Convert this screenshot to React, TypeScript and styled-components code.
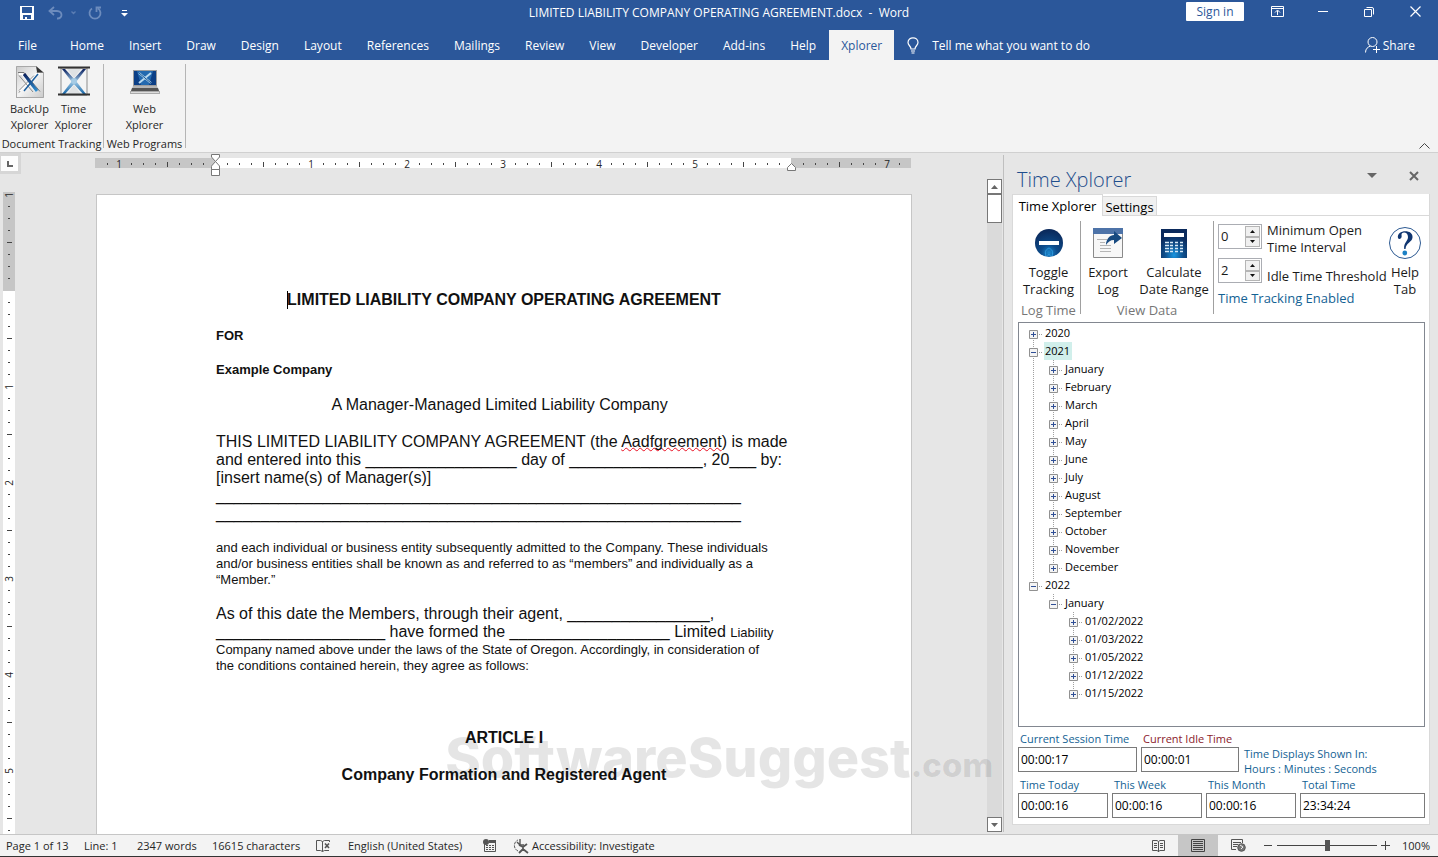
import React, { useState } from "react";
import styled, { createGlobalStyle, css } from "styled-components";

const ui = `"Open Sans", "Noto Sans", sans-serif`;
const doc = `"Liberation Sans", Arial, sans-serif`;
const blue = "#2b579a";
const link = "#136294";

const GlobalStyle = createGlobalStyle`
  * { box-sizing: border-box; }
  body { margin: 0; background: #e6e6e6; font-family: ${ui}; font-size: 12px; color: #262626; }
  button, input { font: inherit; color: inherit; }
  button { padding: 0; border: 0; background: none; cursor: pointer; }
  svg { display: block; flex: none; }
`;

const Shell = styled.div`
  display: flex;
  flex-direction: column;
  height: 100vh;
  overflow: hidden;
`;

/* ---------- title bar ---------- */

const TitleBar = styled.header`
  display: grid;
  grid-template-columns: 1fr auto 1fr;
  height: 30px;
  flex: none;
  background: ${blue};
  color: #fff;
`;
const QuickAccess = styled.div`
  display: flex;
  align-items: center;
  height: 26px;
  padding-left: 20px;
`;
const QuickButton = styled.button<{ $gap?: number }>`
  display: flex;
  margin-right: ${(p) => p.$gap ?? 0}px;
`;
const FileTitle = styled.h1`
  margin: 0;
  font-size: 12px;
  font-weight: 400;
  line-height: 26px;
  white-space: pre;
`;
const WindowControls = styled.div`
  display: flex;
  justify-content: flex-end;
`;
const SignIn = styled.button`
  align-self: flex-start;
  width: 58px;
  height: 19px;
  margin: 2px 10px 0 0;
  border-radius: 1px;
  background: #fff;
  color: ${blue};
  line-height: 20px;
`;
const WindowButton = styled.button`
  display: flex;
  align-items: center;
  justify-content: center;
  width: 46px;
  height: 23px;
`;

/* ---------- ribbon tabs ---------- */

const TabRow = styled.nav`
  display: flex;
  gap: 1px;
  height: 30px;
  flex: none;
  background: ${blue};
  color: #fff;
`;
const RibbonTab = styled.button<{ $active?: boolean; $file?: boolean }>`
  padding: 1px 12px 0;
  line-height: 29px;
  white-space: nowrap;
  ${(p) => p.$file && css`width: 55px; margin-right: 2px;`}
  ${(p) => p.$active && css`background: #f3f3f3; color: ${blue};`}
`;
const TellMe = styled.button`
  display: flex;
  align-items: center;
  gap: 13px;
  margin-left: 12px;
  font-weight: 500;
`;
const Share = styled.button`
  display: flex;
  align-items: center;
  gap: 3px;
  margin: 0 23px 0 auto;
`;

/* ---------- ribbon ---------- */

const Ribbon = styled.section`
  display: flex;
  height: 93px;
  flex: none;
  padding-top: 4px;
  border-bottom: 1px solid #d0d0d0;
  background: #f3f3f3;
`;
const RibbonGroup = styled.div<{ $width: number }>`
  display: flex;
  flex-direction: column;
  justify-content: space-between;
  width: ${(p) => p.$width}px;
  height: 84px;
  border-right: 1px solid #b5b5b5;
`;
const GroupTools = styled.div`
  display: flex;
  justify-content: center;
`;
const RibbonTool = styled.button`
  display: flex;
  flex-direction: column;
  align-items: center;
  width: 44px;
  font-size: 11px;
  line-height: 16px;
  & > svg { margin-bottom: 3px; }
`;
const GroupName = styled.div`
  font-size: 11px;
  line-height: 8px;
  text-align: center;
  white-space: nowrap;
`;
const Collapse = styled.button`
  align-self: flex-end;
  margin: 0 8px 3px auto;
`;

/* ---------- workspace ---------- */

const Main = styled.main`
  display: flex;
  flex: 1;
  min-height: 0;
`;
const Workspace = styled.section`
  position: relative;
  display: flex;
  flex-direction: column;
  flex: 1;
  min-width: 0;
`;
const RulerRow = styled.div`
  display: flex;
  height: 26px;
  flex: none;
  padding-right: 18px;
`;
const Corner = styled.button`
  display: flex;
  align-items: center;
  justify-content: center;
  width: 21px;
  height: 21px;
  border: 3px solid #d6d6d6;
  border-left-width: 1px;
  background: #fdfdfd;
`;
const RulerTrack = styled.div`
  display: flex;
  flex: 1;
  justify-content: center;
  padding-top: 5px;
`;
const Scale = styled.div`
  position: relative;
  width: 816px;
  height: 10px;
`;
const Ticks = styled.div`
  display: flex;
  justify-content: center;
  height: 10px;
  background: linear-gradient(to right, #c6c6c6 120px, #fff 120px 696px, #c6c6c6 696px);
`;
const Cell = styled.span<{ $vertical?: boolean }>`
  display: flex;
  align-items: center;
  justify-content: center;
  flex: none;
  width: 12px;
  height: 12px;
  font-size: 10px;
  line-height: 12px;
  ${(p) => p.$vertical && css`transform: rotate(-90deg);`}
`;
const Tick = styled.i<{ $long?: boolean }>`
  width: 1px;
  height: ${(p) => (p.$long ? 5 : 2)}px;
  background: #444;
`;
const Marker = styled.svg<{ $x: number; $y: number }>`
  position: absolute;
  left: ${(p) => p.$x}px;
  top: ${(p) => p.$y}px;
`;
const DocRow = styled.div`
  display: flex;
  flex: 1;
  min-height: 0;
`;
const VerticalRuler = styled.div`
  width: 21px;
  padding: 13px 0 0 3px;
  overflow: hidden;
`;
const VerticalScale = styled.div`
  display: flow-root;
  width: 12px;
  height: 100%;
  background: linear-gradient(#c6c6c6 99px, #fff 99px);
`;
const VerticalTicks = styled.div`
  margin-top: -3px;
`;
const Canvas = styled.div`
  display: flex;
  flex: 1;
  justify-content: center;
  padding-top: 15px;
  overflow: hidden;
`;
const Page = styled.article`
  width: 816px;
  flex: none;
  padding: 96px 119px;
  border: 1px solid #c6c6c6;
  border-bottom: 0;
  background: #fff;
  font-family: ${doc};
  color: #111;
`;
const Line = styled.p<{ $small?: boolean; $bold?: boolean; $center?: boolean; $gap?: number }>`
  margin: 0 0 ${(p) => p.$gap ?? 0}px;
  font-size: ${(p) => (p.$small ? 13 : 16)}px;
  line-height: ${(p) => (p.$small ? 16 : 18)}px;
  font-weight: ${(p) => (p.$bold ? 700 : 400)};
  text-align: ${(p) => (p.$center ? "center" : "left")};
  white-space: nowrap;
`;
const Caret = styled.span`
  display: inline-block;
  width: 1px;
  height: 18px;
  margin-right: -1px;
  background: #000;
  vertical-align: top;
`;
const Misspelled = styled.span`
  text-decoration: underline wavy #e81123 1px;
  text-decoration-skip-ink: none;
  text-underline-offset: 0;
`;
const SmallRun = styled.span`
  font-size: 13px;
`;
const ScrollBar = styled.div`
  display: flex;
  flex-direction: column;
  width: 16px;
  padding: 0 1px 2px 0;
`;
const ScrollTrack = styled.div`
  flex: 1;
  background: #dadada;
`;
const ScrollThumb = styled.div`
  height: 29px;
  border: 1px solid #777;
  background: #fff;
`;
const ScrollArrow = styled.button`
  display: flex;
  align-items: center;
  justify-content: center;
  height: 15px;
  border: 1px solid #777;
  background: #fff;
`;
const Watermark = styled.div`
  position: absolute;
  right: 10px;
  bottom: 36px;
  color: rgba(0, 0, 0, 0.1);
  font-family: Inter, sans-serif;
  font-size: 54px;
  font-weight: 800;
  line-height: 66px;
  white-space: nowrap;
  pointer-events: none;
`;
const WatermarkSuffix = styled.span`
  font-size: 33px;
`;

/* ---------- task pane ---------- */

const Pane = styled.aside`
  display: flex;
  flex-direction: column;
  width: 435px;
  flex: none;
  margin: 2px 0;
  padding: 0 8px 7px;
  border-left: 1px solid #bfbfbf;
`;
const PaneHeader = styled.div`
  display: flex;
  align-items: center;
  height: 39px;
  padding: 10px 9px 0 5px;
`;
const PaneTitle = styled.h2`
  flex: 1;
  margin: 0;
  color: #1f4e8c;
  font-family: "Open Sans", sans-serif;
  font-size: 20px;
  font-weight: 300;
  line-height: 28px;
`;
const PaneButton = styled.button`
  width: 12px;
  margin: 0 0 8px 30px;
`;
const PaneBody = styled.div`
  display: flex;
  flex-direction: column;
  flex: 1;
  min-height: 0;
  border: 1px solid #d9d9d9;
  border-top: 0;
  background: #fff;
`;
const PaneTabs = styled.div`
  display: flex;
  align-items: flex-end;
  height: 22px;
  flex: none;
`;
const PaneTab = styled.button<{ $active?: boolean }>`
  height: ${(p) => (p.$active ? 22 : 20)}px;
  width: ${(p) => (p.$active ? 90 : 54)}px;
  border: 1px solid #d9d9d9;
  border-width: 1px 1px ${(p) => (p.$active ? 0 : 1)}px 0;
  background: ${(p) => (p.$active ? "#fff" : "#f0f0f0")};
  color: #000;
  font-size: 13px;
  line-height: 20px;
  white-space: nowrap;
`;
const TabFill = styled.span`
  flex: 1;
  border-bottom: 1px solid #d9d9d9;
`;
const Tools = styled.div`
  display: flex;
  height: 106px;
  flex: none;
  padding: 5px 8px 8px 4px;
  font-size: 13px;
  color: #1a1a1a;
`;
const ToolGroup = styled.div<{ $width: number }>`
  display: flex;
  flex-direction: column;
  justify-content: space-between;
  width: ${(p) => p.$width}px;
  flex: none;
  border-right: 1px solid #a0a0a0;
`;
const ToolRow = styled.div`
  display: flex;
  justify-content: center;
`;
const Tool = styled.button<{ $width: number }>`
  display: flex;
  flex-direction: column;
  align-items: center;
  width: ${(p) => p.$width}px;
  flex: none;
  padding-top: 6px;
  line-height: 17px;
  white-space: nowrap;
`;
const ToolIcon = styled.span`
  display: flex;
  align-items: center;
  height: 32px;
  margin-bottom: 5px;
`;
const ToolCaption = styled.div`
  color: #767676;
  line-height: 8px;
  text-align: center;
  white-space: nowrap;
`;
const Options = styled.div`
  display: flex;
  flex-direction: column;
  flex: 1;
  min-width: 0;
  padding: 1px 0 0 4px;
`;
const Option = styled.div`
  display: flex;
  height: 34px;
  gap: 5px;
  line-height: 17px;
`;
const OptionLabel = styled.label<{ $low?: boolean }>`
  padding-top: ${(p) => (p.$low ? 12 : 0)}px;
  white-space: nowrap;
`;
const Spinner = styled.div`
  display: flex;
  width: 44px;
  height: 25px;
  flex: none;
  margin-top: 2px;
  padding: 1px;
  border: 1px solid #abadb3;
`;
const SpinInput = styled.input`
  flex: 1;
  min-width: 0;
  padding: 0 0 1px 1px;
  border: 0;
  outline: 0;
`;
const SpinButtons = styled.div`
  display: flex;
  flex-direction: column;
  width: 15px;
`;
const SpinButton = styled.button`
  display: flex;
  align-items: center;
  justify-content: center;
  flex: 1;
  border: 1px solid #b5b5b5;
  background: #f0f0f0;
`;
const TrackingState = styled.div`
  color: ${link};
  line-height: 17px;
  white-space: nowrap;
`;
const Tree = styled.ul`
  flex: 1;
  min-height: 0;
  margin: 0 4px 0 5px;
  padding: 1px 0 0 5px;
  overflow: hidden;
  border: 1px solid #828790;
  list-style: none;
`;
const TreeRow = styled.li`
  display: flex;
  height: 18px;
  color: #000;
`;
const Indent = styled.span<{ $line: "none" | "full" | "top" | "bottom" }>`
  position: relative;
  display: flex;
  align-items: center;
  width: 20px;
  padding: 2px 0 0 5px;
  &::before {
    content: "";
    display: ${(p) => (p.$line === "none" ? "none" : "block")};
    position: absolute;
    left: 9px;
    top: ${(p) => (p.$line === "bottom" ? 10 : 0)}px;
    bottom: ${(p) => (p.$line === "top" ? 8 : 0)}px;
    width: 1px;
    background: repeating-linear-gradient(#a0a0a0 0 1px, transparent 1px 2px);
  }
`;
const Expander = styled.button`
  position: relative;
  width: 9px;
  height: 9px;
`;
const Stub = styled.i`
  width: 4px;
  height: 1px;
  margin-left: 1px;
  background: repeating-linear-gradient(to right, #a0a0a0 0 1px, transparent 1px 2px);
`;
const TreeLabel = styled.span<{ $selected?: boolean }>`
  padding: 0 2px 0 1px;
  font-size: 11px;
  line-height: 18px;
  background: ${(p) => (p.$selected ? "#d1efeb" : "none")};
`;
const Times = styled.div`
  flex: none;
  padding: 3px 4px 6px 5px;
`;
const TimeRow = styled.div`
  display: flex;
  gap: 4px;
`;
const Field = styled.label<{ $width?: number; $idle?: boolean }>`
  display: flex;
  flex-direction: column;
  ${(p) => (p.$width ? `width: ${p.$width}px;` : "flex: 1;")}
  min-width: 0;
  color: ${(p) => (p.$idle ? "#8b1a2b" : link)};
  font-size: 11px;
  line-height: 17px;
`;
const FieldName = styled.span`
  padding-left: 2px;
  height: 17px;
  white-space: nowrap;
`;
const FieldBox = styled.input`
  width: 100%;
  height: 25px;
  padding: 0 2px;
  border: 1px solid #7a7a7a;
  border-radius: 0;
  color: #000;
  font-size: 12px;
`;
const Note = styled.p`
  margin: 0;
  padding: 16px 0 0 1px;
  color: ${link};
  font-size: 11px;
  line-height: 15px;
  white-space: nowrap;
`;

/* ---------- status bar ---------- */

const StatusBar = styled.footer`
  display: flex;
  align-items: center;
  height: 23px;
  flex: none;
  padding: 0 8px 0 6px;
  border-top: 1px solid #c6c6c6;
  border-bottom: 1px solid #333;
  background: #f3f3f3;
  font-size: 11px;
  white-space: nowrap;
`;
const StatusItem = styled.button<{ $width: number }>`
  display: flex;
  align-items: center;
  gap: 3px;
  width: ${(p) => p.$width}px;
  flex: none;
`;
const ViewButtons = styled.div`
  display: flex;
  align-self: stretch;
  margin-left: auto;
`;
const ViewButton = styled.button<{ $active?: boolean }>`
  display: flex;
  align-items: center;
  justify-content: center;
  width: 40px;
  background: ${(p) => (p.$active ? "#c6c6c6" : "none")};
`;
const ZoomSlider = styled.input`
  width: 100px;
  height: 11px;
  margin: 0 4px;
  appearance: none;
  background: linear-gradient(#444, #444) center / 100% 1px no-repeat;
  &::-webkit-slider-thumb {
    appearance: none;
    width: 5px;
    height: 11px;
    background: #555;
  }
`;
const ZoomValue = styled.span`
  width: 35px;
  text-align: right;
`;

/* ---------- drawings ---------- */

const BackupIcon = () => (
  <svg width="30" height="34" viewBox="0 0 30 34">
    <defs>
      <linearGradient id="paper" x1="0" y1="0" x2="1" y2="1">
        <stop offset="0" stopColor="#c9c9c9" /><stop offset=".5" stopColor="#f4f4f4" /><stop offset="1" stopColor="#c9c9c9" />
      </linearGradient>
      <linearGradient id="ink" x1="0" y1="0" x2="0" y2="1">
        <stop offset="0" stopColor="#0b1f5c" /><stop offset="1" stopColor="#2f8fd0" />
      </linearGradient>
    </defs>
    <path d="M1 2H22L29 8V34H1Z" fill="url(#paper)" />
    <path d="M1.500 34V2.500H21M1 33.500H28.500V8" fill="none" stroke="#a8a8a8" />
    <path d="M21 2L28 8H22Z" fill="#333" />
    <path d="M3 8.500H9L25 27.500M28 8.500H22L4 28.500" fill="none" stroke="#777" strokeWidth="1" />
    <path d="M4 10H7L21 27.500M25 10H21L5 27" fill="none" stroke="#fff" strokeWidth="2" />
    <path d="M4 11.500L18 28M19 11.500L4 26.500" fill="none" stroke="#8a8a8a" strokeWidth="1" />
    <path d="M9 10L22 27" stroke="url(#ink)" strokeWidth="3" />
    <path d="M23 10L9 27" stroke="#1c5f9f" strokeWidth="1.500" />
  </svg>
);
const HourglassIcon = () => (
  <svg width="34" height="34" viewBox="0 0 34 34">
    <defs>
      <linearGradient id="limb" x1="0" y1="0" x2="0" y2="1">
        <stop offset="0" stopColor="#0a1f60" /><stop offset=".5" stopColor="#9cc7e4" /><stop offset="1" stopColor="#1565a8" />
      </linearGradient>
    </defs>
    <path d="M4 4H30V31H4Z" fill="#f4f4f4" stroke="#8d8d8d" />
    <path d="M10 5H24L17 14ZM10 30L17 21L24 30Z" fill="#dfe2e4" />
    <path d="M5 5H8L19 17L29 30H26L15 18Z" fill="url(#limb)" />
    <path d="M29 5H26L15 17L5 30H8L19 18Z" fill="url(#limb)" />
    <circle cx="17" cy="17" r="3" fill="#a5cbe5" />
    <path d="M1 3.500H33M1 30.500H33" stroke="#333" strokeWidth="2" />
  </svg>
);
const LaptopIcon = () => (
  <svg width="32" height="34" viewBox="0 0 32 34">
    <path d="M4 6H28V22H4Z" fill="#9d9d9d" />
    <path d="M5 7H27V21H5Z" fill="#0c3f86" />
    <path d="M8 7H24L20 21H12Z" fill="#2d7cc0" opacity=".7" />
    <path d="M10 9L22 19M22 9L10 19" stroke="#b9d9ee" strokeWidth="2" />
    <path d="M10 9L22 19" stroke="#165595" strokeWidth="1" />
    <path d="M4 22H28L30 27H2Z" fill="#b5b5b5" />
    <path d="M3 24H29L30 27H2Z" fill="#555" />
    <path d="M1 27H31V30H1Z" fill="#ababab" />
    <path d="M2 28.500H30" stroke="#ddd" />
  </svg>
);
const ToggleIcon = () => (
  <svg width="30" height="30" viewBox="0 0 30 30">
    <defs>
      <radialGradient id="disc" cx=".5" cy=".85" r=".8">
        <stop offset="0" stopColor="#1d8ad0" /><stop offset=".35" stopColor="#0c4c8c" /><stop offset="1" stopColor="#0b2a5c" />
      </radialGradient>
    </defs>
    <circle cx="15" cy="15" r="14" fill="url(#disc)" />
    <path d="M5 13H25V17H5Z" fill="#fff" />
    <path d="M12 28C10 23 13 21 15 20C17 21 20 23 18 28M14 28C13 26 17 26 16 28" fill="none" stroke="#2f9be0" />
  </svg>
);
const ExportIcon = () => (
  <svg width="30" height="30" viewBox="0 0 30 30">
    <path d="M.5.500H29.500V29.500H.5Z" fill="#f7f7f7" stroke="#8a8a8a" />
    <path d="M0 0H30V6H0Z" fill="#4d73a8" />
    <path d="M4 11.500H14M7 14.500H12M7 17.500H18M7 20.500H18M7 23.500H18" stroke="#b5b5b5" />
    <path d="M13 17C13 11 17 7 21 7V3L29 10L21 16V12C17 12 15 14 13 17Z" fill="#174a80" />
  </svg>
);
const CalculatorIcon = () => (
  <svg width="28" height="30" viewBox="0 0 28 30">
    <defs>
      <radialGradient id="calc" cx=".5" cy=".9" r=".7">
        <stop offset="0" stopColor="#1a96e0" /><stop offset=".5" stopColor="#0e4f8c" /><stop offset="1" stopColor="#0b2a5c" />
      </radialGradient>
    </defs>
    <path d="M1 1H27V30H1Z" fill="url(#calc)" />
    <path d="M4 5H24V9H4Z" fill="#fff" />
    {[14, 17, 20, 23].map((y) => (
      <path key={y} d={`M5 ${y}.5H9M10 ${y}.5H13M15 ${y}.5H18M20 ${y}.5H23`} stroke="#d8e9f6" strokeWidth="1.500" />
    ))}
  </svg>
);
const HelpIcon = () => (
  <svg width="32" height="32" viewBox="0 0 32 32">
    <circle cx="16" cy="16" r="15.500" fill="#fff" stroke="#2d5a92" />
    <path d="M9 11C7 2.500 24.500 1.500 23.500 10.500C23 15.500 17 15.500 16.500 22H15.200C14.500 15.500 19 14.500 19 10C19 4 11.500 4.500 12.600 8.500C13.300 11.500 9.800 13 9 11Z" fill="#0f3570" />
    <circle cx="15.800" cy="26" r="2.400" fill="#1b80c4" />
  </svg>
);
const Arrow = ({ down, size = 7 }: { down?: boolean; size?: number }) => (
  <svg width={size} height={size > 5 ? 4 : 3} viewBox="0 0 7 4" preserveAspectRatio="none">
    <path d={down ? "M0 0H7L3.500 4Z" : "M0 4H7L3.500 0Z"} fill={size > 5 ? "#666" : "#111"} />
  </svg>
);

/* ---------- data ---------- */

const ribbonTabs = ["Home", "Insert", "Draw", "Design", "Layout", "References", "Mailings", "Review", "View", "Developer", "Add-ins", "Help", "Xplorer"];

type LineKind = "none" | "full" | "top" | "bottom";
type Node = { label: string; lines: LineKind[]; open?: boolean };

const months = ["January", "February", "March", "April", "May", "June", "July", "August", "September", "October", "November", "December"];
const days = ["01/02/2022", "01/03/2022", "01/05/2022", "01/12/2022", "01/15/2022"];
const nodes: Node[] = [
  { label: "2020", lines: ["bottom"] },
  { label: "2021", lines: ["full"], open: true },
  ...months.map((label, i): Node => ({ label, lines: ["full", i === 11 ? "top" : "full"] })),
  { label: "2022", lines: ["top"], open: true },
  { label: "January", lines: ["none", "top"], open: true },
  ...days.map((label, i): Node => ({ label, lines: ["none", "none", i === 4 ? "top" : "full"] })),
];

const scaleMark = (k: number) => {
  if (k === 0 || k === 48) return null;
  if (k % 8 === 0) return Math.abs(k / 8);
  return <Tick $long={k % 4 === 0} />;
};

const blank = (n: number) => "_".repeat(n);

export default function App() {
  const [minOpen, setMinOpen] = useState(0);
  const [idle, setIdle] = useState(2);
  const [selected, setSelected] = useState(1);

  const spinner = (id: string, value: number, set: (n: number) => void) => (
    <Spinner>
      <SpinInput id={id} value={value} onChange={(e) => set(Number(e.target.value) || 0)} />
      <SpinButtons>
        <SpinButton aria-label="Increase" onClick={() => set(value + 1)}><Arrow size={5} /></SpinButton>
        <SpinButton aria-label="Decrease" onClick={() => set(Math.max(0, value - 1))}><Arrow down size={5} /></SpinButton>
      </SpinButtons>
    </Spinner>
  );

  return (
    <Shell>
      <GlobalStyle />
      <TitleBar>
        <QuickAccess>
          <QuickButton aria-label="Save" $gap={14}>
            <svg width="14" height="14" viewBox="0 0 14 14"><path fill="#fff" fillRule="evenodd" d="M0 0H14V14H0ZM2 1V7H12V1ZM3 9V13H5V11H7V13H11V9Z" /></svg>
          </QuickButton>
          <QuickButton aria-label="Undo" $gap={8}>
            <svg width="15" height="14" viewBox="0 0 15 14" fill="none" stroke="#6d8cbd" strokeWidth="1.800"><path d="M6 1L1.500 5L6 9M2 5H9C15 5 15 13 9 12.500" /></svg>
          </QuickButton>
          <QuickButton aria-label="Undo history" $gap={12}>
            <svg width="5" height="4" viewBox="0 0 5 4" fill="none" stroke="#5b7db3" strokeWidth="1.300"><path d="M.5.500L2.500 2.500L4.500.500" /></svg>
          </QuickButton>
          <QuickButton aria-label="Repeat" $gap={19}>
            <svg width="14" height="14" viewBox="0 0 14 14" fill="none" stroke="#6d8cbd" strokeWidth="1.800"><path d="M4 2.500A5.500 5.500 0 1 0 10 2.500M13 1.500H8.500V6" /></svg>
          </QuickButton>
          <QuickButton aria-label="Customize toolbar">
            <svg width="7" height="7" viewBox="0 0 7 7" fill="#fff"><path d="M1 0H6V1H1ZM0 3H7L3.500 6.500Z" /></svg>
          </QuickButton>
        </QuickAccess>
        <FileTitle>LIMITED LIABILITY COMPANY OPERATING AGREEMENT.docx  -  Word</FileTitle>
        <WindowControls>
          <SignIn>Sign in</SignIn>
          <WindowButton aria-label="Ribbon display options">
            <svg width="13" height="11" viewBox="0 0 13 11" fill="none" stroke="#fff"><path d="M.5.500H12.500V10.500H.5ZM.5 2.500H12.500M6.500 9V4.500M4 6.500L6.500 4L9 6.500" /></svg>
          </WindowButton>
          <WindowButton aria-label="Minimize">
            <svg width="10" height="1" viewBox="0 0 10 1"><path d="M0 0H10V1H0Z" fill="#fff" /></svg>
          </WindowButton>
          <WindowButton aria-label="Restore">
            <svg width="10" height="10" viewBox="0 0 10 10" fill="none" stroke="#fff"><path d="M.5 2.500H7.500V9.500H.5ZM2.500.500H8Q9.500.500 9.500 2V7.500" /></svg>
          </WindowButton>
          <WindowButton aria-label="Close">
            <svg width="11" height="11" viewBox="0 0 11 11" stroke="#fff" strokeWidth="1.200"><path d="M.5.500L10.500 10.500M10.500.500L.5 10.500" /></svg>
          </WindowButton>
        </WindowControls>
      </TitleBar>

      <TabRow>
        <RibbonTab $file>File</RibbonTab>
        {ribbonTabs.map((t) => <RibbonTab key={t} $active={t === "Xplorer"}>{t}</RibbonTab>)}
        <TellMe>
          <svg width="12" height="17" viewBox="0 0 12 17" fill="none" stroke="#fff" strokeWidth="1.200"><path d="M4 12C4 9 1 8.500 1 5.500C1-.700 11-.700 11 5.500C11 8.500 8 9 8 12ZM4 14H8M4.500 16H7.500" /></svg>
          Tell me what you want to do
        </TellMe>
        <Share>
          <svg width="15" height="16" viewBox="0 0 15 16" fill="none" stroke="#fff"><circle cx="7.500" cy="5" r="4.500" /><path d="M.5 15.500C.5 11.500 3 10 5.500 9M11.500 9V16M8 12.500H15" /></svg>
          Share
        </Share>
      </TabRow>

      <Ribbon>
        <RibbonGroup $width={104}>
          <GroupTools>
            <RibbonTool><BackupIcon />BackUp<br />Xplorer</RibbonTool>
            <RibbonTool><HourglassIcon />Time<br />Xplorer</RibbonTool>
          </GroupTools>
          <GroupName>Document Tracking</GroupName>
        </RibbonGroup>
        <RibbonGroup $width={82}>
          <GroupTools>
            <RibbonTool><LaptopIcon />Web<br />Xplorer</RibbonTool>
          </GroupTools>
          <GroupName>Web Programs</GroupName>
        </RibbonGroup>
        <Collapse aria-label="Collapse the ribbon">
          <svg width="11" height="6" viewBox="0 0 11 6" fill="none" stroke="#444"><path d="M.5 5.500L5.500.500L10.500 5.500" /></svg>
        </Collapse>
      </Ribbon>

      <Main>
        <Workspace>
          <RulerRow>
            <Corner aria-label="Left tab">
              <svg width="6" height="6" viewBox="0 0 6 6"><path d="M1 0V5H6" fill="none" stroke="#666" strokeWidth="2" /></svg>
            </Corner>
            <RulerTrack>
              <Scale>
                <Ticks>
                  {Array.from({ length: 67 }, (_, i) => <Cell key={i}>{scaleMark(i - 9)}</Cell>)}
                </Ticks>
                <Marker $x={116} $y={-4} width="9" height="22" viewBox="0 0 9 22" fill="#fff" stroke="#777">
                  <path d="M.5.500H8.500V3L4.500 7.500L.5 3ZM.5 12.500V12L4.500 7.500L8.500 12V15.500H.5ZM.5 15.500H8.500V21.500H.5Z" />
                </Marker>
                <Marker $x={692} $y={5} width="9" height="8" viewBox="0 0 9 8" fill="#fff" stroke="#777">
                  <path d="M.5 7.500V4.500L4.500.500L8.500 4.500V7.500Z" />
                </Marker>
              </Scale>
            </RulerTrack>
          </RulerRow>
          <DocRow>
            <VerticalRuler>
              <VerticalScale>
                <VerticalTicks>
                  {Array.from({ length: 90 }, (_, i) => <Cell key={i} $vertical>{scaleMark(i - 8)}</Cell>)}
                </VerticalTicks>
              </VerticalScale>
            </VerticalRuler>
            <Canvas>
              <Page>
                <Line $bold $center $gap={19}><Caret />LIMITED LIABILITY COMPANY OPERATING AGREEMENT</Line>
                <Line $small $bold $gap={18}>FOR</Line>
                <Line $small $bold $gap={18}>Example Company</Line>
                <Line $center $gap={19}>A Manager-Managed Limited Liability Company{"\u00a0\u00a0"}</Line>
                <Line>THIS LIMITED LIABILITY COMPANY AGREEMENT (the <Misspelled>Aadfgreement</Misspelled>) is made</Line>
                <Line>and entered into this {blank(17)} day of {blank(15)}, 20{blank(3)} by:</Line>
                <Line>[insert name(s) of Manager(s)]</Line>
                <Line>{blank(59)}</Line>
                <Line $gap={17}>{blank(59)}</Line>
                <Line $small>and each individual or business entity subsequently admitted to the Company. These individuals</Line>
                <Line $small>and/or business entities shall be known as and referred to as “members” and individually as a</Line>
                <Line $small $gap={17}>“Member.”</Line>
                <Line>As of this date the Members, through their agent, {blank(16)},</Line>
                <Line>{blank(19)} have formed the {blank(18)} Limited <SmallRun>Liability</SmallRun></Line>
                <Line $small>Company named above under the laws of the State of Oregon. Accordingly, in consideration of</Line>
                <Line $small $gap={55}>the conditions contained herein, they agree as follows:</Line>
                <Line $bold $center $gap={19}>ARTICLE I</Line>
                <Line $bold $center>Company Formation and Registered Agent</Line>
              </Page>
            </Canvas>
            <ScrollBar>
              <ScrollArrow aria-label="Scroll up"><Arrow /></ScrollArrow>
              <ScrollTrack><ScrollThumb /></ScrollTrack>
              <ScrollArrow aria-label="Scroll down"><Arrow down /></ScrollArrow>
            </ScrollBar>
          </DocRow>
          <Watermark>SoftwareSuggest<WatermarkSuffix>.com</WatermarkSuffix></Watermark>
        </Workspace>

        <Pane>
          <PaneHeader>
            <PaneTitle>Time Xplorer</PaneTitle>
            <PaneButton aria-label="Pane options">
              <svg width="10" height="5" viewBox="0 0 10 5"><path d="M0 0H10L5 5Z" fill="#666" /></svg>
            </PaneButton>
            <PaneButton aria-label="Close pane">
              <svg width="10" height="10" viewBox="0 0 10 10" stroke="#666" strokeWidth="2"><path d="M1 1L9 9M9 1L1 9" /></svg>
            </PaneButton>
          </PaneHeader>
          <PaneBody>
            <PaneTabs>
              <PaneTab $active>Time Xplorer</PaneTab>
              <PaneTab>Settings</PaneTab>
              <TabFill />
            </PaneTabs>
            <Tools>
              <ToolGroup $width={64}>
                <ToolRow>
                  <Tool $width={60}><ToolIcon><ToggleIcon /></ToolIcon>Toggle<br />Tracking</Tool>
                </ToolRow>
                <ToolCaption>Log Time</ToolCaption>
              </ToolGroup>
              <ToolGroup $width={133}>
                <ToolRow>
                  <Tool $width={54}><ToolIcon><ExportIcon /></ToolIcon>Export<br />Log</Tool>
                  <Tool $width={78}><ToolIcon><CalculatorIcon /></ToolIcon>Calculate<br />Date Range</Tool>
                </ToolRow>
                <ToolCaption>View Data</ToolCaption>
              </ToolGroup>
              <Options>
                <Option>
                  {spinner("min-open", minOpen, setMinOpen)}
                  <OptionLabel htmlFor="min-open">Minimum Open<br />Time Interval</OptionLabel>
                </Option>
                <Option>
                  {spinner("idle", idle, setIdle)}
                  <OptionLabel htmlFor="idle" $low>Idle Time Threshold</OptionLabel>
                </Option>
                <TrackingState>Time Tracking Enabled</TrackingState>
              </Options>
              <Tool $width={32}><ToolIcon><HelpIcon /></ToolIcon>Help<br />Tab</Tool>
            </Tools>
            <Tree role="tree">
              {nodes.map((n, i) => (
                <TreeRow key={i} role="treeitem" onClick={() => setSelected(i)}>
                  {n.lines.map((line, d) => (
                    <Indent key={d} $line={line}>
                      {d === n.lines.length - 1 && (
                        <>
                          <Expander aria-label={`Toggle ${n.label}`}>
                            <svg width="9" height="9" viewBox="0 0 9 9">
                              <path d="M.5.500H8.500V8.500H.5Z" fill="#f4f4f4" stroke="#919191" />
                              <path d={n.open ? "M2 4.500H7" : "M2 4.500H7M4.500 2V7"} stroke="#2f4f96" />
                            </svg>
                          </Expander>
                          <Stub />
                        </>
                      )}
                    </Indent>
                  ))}
                  <TreeLabel $selected={i === selected}>{n.label}</TreeLabel>
                </TreeRow>
              ))}
            </Tree>
            <Times>
              <TimeRow>
                <Field $width={119}><FieldName>Current Session Time</FieldName><FieldBox readOnly value="00:00:17" /></Field>
                <Field $width={98} $idle><FieldName>Current Idle Time</FieldName><FieldBox readOnly value="00:00:01" /></Field>
                <Note>Time Displays Shown In:<br />Hours : Minutes : Seconds</Note>
              </TimeRow>
              <TimeRow>
                <Field $width={90}><FieldName>Time Today</FieldName><FieldBox readOnly value="00:00:16" /></Field>
                <Field $width={90}><FieldName>This Week</FieldName><FieldBox readOnly value="00:00:16" /></Field>
                <Field $width={90}><FieldName>This Month</FieldName><FieldBox readOnly value="00:00:16" /></Field>
                <Field><FieldName>Total Time</FieldName><FieldBox readOnly value="23:34:24" /></Field>
              </TimeRow>
            </Times>
          </PaneBody>
        </Pane>
      </Main>

      <StatusBar>
        <StatusItem $width={78}>Page 1 of 13</StatusItem>
        <StatusItem $width={53}>Line: 1</StatusItem>
        <StatusItem $width={75}>2347 words</StatusItem>
        <StatusItem $width={104}>16615 characters</StatusItem>
        <StatusItem $width={32} aria-label="Proofing errors">
          <svg width="15" height="14" viewBox="0 0 15 14" fill="none" stroke="#555"><path d="M6.500 12.500V2.500L4.500 1.500H.5V11.500H4.500L6.500 12.500L8.500 11.500H13M6.500 2.500L8.500 1.500H13.500V3" /><path d="M9 4.500L13 9M13 4.500L9 9" strokeWidth="1.600" /></svg>
        </StatusItem>
        <StatusItem $width={135}>English (United States)</StatusItem>
        <StatusItem $width={30} aria-label="Macro recording">
          <svg width="13" height="13" viewBox="0 0 13 13"><path d="M1.500 5V12.500H12.500V1.500H6" fill="none" stroke="#555" /><path d="M6 1H13V4H6Z" fill="#555" /><circle cx="3" cy="3" r="3" fill="#555" /><path d="M3 6.500H11M3 8.500H11M3 10.500H11" stroke="#555" strokeDasharray="2 1" /></svg>
        </StatusItem>
        <StatusItem $width={160}>
          <svg width="16" height="16" viewBox="0 0 16 16" fill="none" stroke="#555"><path d="M5 13A6 6 0 0 1 5 2" strokeDasharray="3 1" /><path d="M7 1V7M4 4L7 7H11" strokeWidth="1.400" /><path d="M6 7L10 9L14 6M10 9V11M6 15L10 11L15 15" strokeWidth="1.800" /></svg>
          Accessibility: Investigate
        </StatusItem>
        <ViewButtons>
          <ViewButton aria-label="Read mode">
            <svg width="13" height="12" viewBox="0 0 13 12" fill="none" stroke="#555"><path d="M6.500 12V1.500L5 .500H.5V10.500H5L6.500 11.500L8 10.500H12.500V.500H8L6.500 1.500M2 3.500H5M2 5.500H5M2 7.500H5M8 3.500H11M8 5.500H11M8 7.500H11" /></svg>
          </ViewButton>
          <ViewButton $active aria-label="Print layout">
            <svg width="14" height="13" viewBox="0 0 14 13" fill="none" stroke="#444"><path d="M.5.500H13.500V12.500H.5ZM2 2.500H12M2 4.500H12M2 6.500H12M2 8.500H12M2 10.500H12" /></svg>
          </ViewButton>
          <ViewButton aria-label="Web layout">
            <svg width="15" height="13" viewBox="0 0 15 13" fill="none" stroke="#555"><path d="M5 10.500H.5V.500H11.500V4M2 3.500H10M2 5.500H7M2 7.500H6" /><circle cx="10.500" cy="8.500" r="3.800" fill="#777" /><path d="M9 6L12 8L10 10" stroke="#eee" /></svg>
          </ViewButton>
        </ViewButtons>
        <QuickButton aria-label="Zoom out">
          <svg width="15" height="9" viewBox="0 0 15 9" stroke="#444"><path d="M6 4.500H14" /></svg>
        </QuickButton>
        <ZoomSlider type="range" min="0" max="100" defaultValue="50" aria-label="Zoom" />
        <QuickButton aria-label="Zoom in" $gap={5}>
          <svg width="9" height="9" viewBox="0 0 9 9" stroke="#444"><path d="M0 4.500H9M4.500 0V9" /></svg>
        </QuickButton>
        <ZoomValue>100%</ZoomValue>
      </StatusBar>
    </Shell>
  );
}
